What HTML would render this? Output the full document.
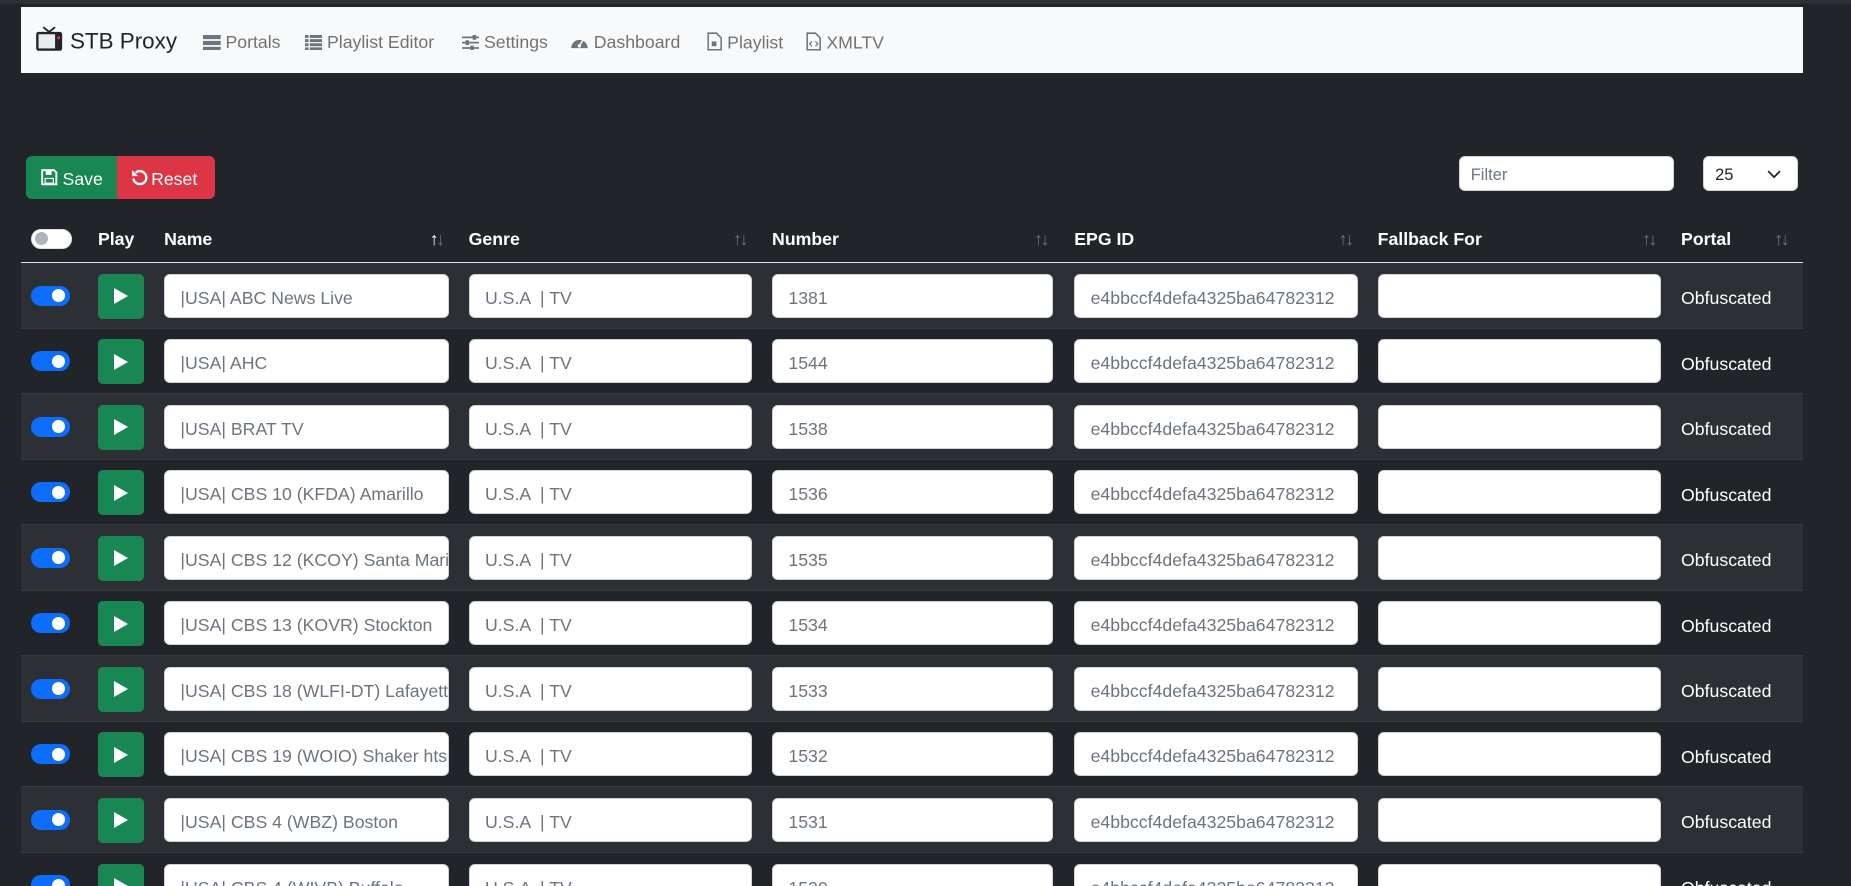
<!DOCTYPE html>
<html><head><meta charset="utf-8">
<style>
html,body{margin:0;padding:0;background:#212529;overflow:hidden}
body{width:1851px;height:886px;position:relative;font-family:"Liberation Sans",sans-serif}
#z{zoom:1.1805;position:absolute;left:0;top:0;width:1568px;height:751px;}
.topbar{position:absolute;left:0;top:0;width:1568px;height:3px;background:#2d3034}
.nav{position:absolute;left:18px;top:6px;width:1509px;height:56px;background:#f8f9fa}
.brand{position:absolute;left:12px;top:16px;font-size:19px;color:#212529}
.nl{position:absolute;top:21px;font-size:15px;color:rgba(0,0,0,.55);white-space:nowrap}
.nl svg{vertical-align:-2px;margin-right:4px}
.btn{position:absolute;top:132px;height:37px;color:#fff;font-size:15px;line-height:40px}
.inp{position:absolute;background:#fff;border:1px solid #ced4da;border-radius:5px;box-sizing:border-box;font-size:15px;color:#6c757d;padding-left:13px;overflow:hidden;white-space:nowrap}
.th{position:absolute;top:194px;font-size:15px;font-weight:bold;color:#fff}
.ar{position:absolute;top:194px;font-size:15px;color:#6c757d;letter-spacing:-2px}
.row{position:absolute;left:18px;width:1509px;height:55px;border-bottom:1px solid #373b3e;box-sizing:border-box}
.tg{position:absolute;left:8px;width:33px;height:17px;border-radius:9px;background:#0d6efd}
.tg::after{content:"";position:absolute;right:4px;top:3px;width:11px;height:11px;border-radius:50%;background:#fff}
.pb{position:absolute;left:65px;width:39px;height:38px;background:#198754;border-radius:4px}
.pb::after{content:"";position:absolute;left:14px;top:12px;border-left:12px solid #fff;border-top:7px solid transparent;border-bottom:7px solid transparent}
.ob{position:absolute;left:1406px;font-size:15px;color:#fff}
</style></head><body><div id="z">
<div class="topbar"></div>
<div class="nav">
 <div class="brand"><svg width="24" height="22" viewBox="0 0 24 22" style="vertical-align:-3px"><path d="M7 1l5 4 5-4" stroke="#212529" stroke-width="1.6" fill="none"/><rect x="1" y="5" width="22" height="16" rx="2" fill="#212529"/><rect x="3" y="7" width="14" height="12" fill="#e9ecef"/><circle cx="20" cy="10" r="1.3" fill="#dc3545"/></svg> STB Proxy</div>
 <div class="nl" style="left:154px"><svg width="15" height="13"><rect x="0" y="0" width="15" height="3.5" fill="#6c757d"/><rect x="0" y="5" width="15" height="3.5" fill="#6c757d"/><rect x="0" y="10" width="15" height="3" fill="#6c757d"/></svg>Portals</div>
 <div class="nl" style="left:240px"><svg width="15" height="13"><g fill="#6c757d"><rect x="0" y="0" width="3" height="2.5"/><rect x="4" y="0" width="11" height="2.5"/><rect x="0" y="3.5" width="3" height="2.5"/><rect x="4" y="3.5" width="11" height="2.5"/><rect x="0" y="7" width="3" height="2.5"/><rect x="4" y="7" width="11" height="2.5"/><rect x="0" y="10.5" width="3" height="2.5"/><rect x="4" y="10.5" width="11" height="2.5"/></g></svg>Playlist Editor</div>
 <div class="nl" style="left:373px"><svg width="15" height="13"><g stroke="#6c757d" stroke-width="1.5"><line x1="0" y1="2" x2="15" y2="2"/><line x1="0" y1="6.5" x2="15" y2="6.5"/><line x1="0" y1="11" x2="15" y2="11"/></g><g fill="#6c757d"><rect x="9" y="0" width="3" height="4"/><rect x="3" y="4.5" width="3" height="4"/><rect x="7" y="9" width="3" height="4"/></g></svg>Settings</div>
 <div class="nl" style="left:465px"><svg width="16" height="14"><path d="M1 12A7 7 0 1 1 15 12Z" fill="#6c757d"/><circle cx="8" cy="10" r="1.5" fill="#f8f9fa"/><line x1="8" y1="10" x2="11" y2="5" stroke="#f8f9fa" stroke-width="1.3"/></svg>Dashboard</div>
 <div class="nl" style="left:581px"><svg width="13" height="16"><path d="M1 1h7l4 4v10H1z" fill="none" stroke="#6c757d" stroke-width="1.3"/><rect x="4" y="8" width="4" height="4" fill="#6c757d"/></svg>Playlist</div>
 <div class="nl" style="left:665px"><svg width="13" height="16"><path d="M1 1h7l4 4v10H1z" fill="none" stroke="#6c757d" stroke-width="1.3"/><path d="M5 8l-2 2 2 2M8 8l2 2-2 2" fill="none" stroke="#6c757d"/></svg>XMLTV</div>
</div>
<div class="btn" style="left:22px;width:77px;background:#198754;border-radius:5px 0 0 5px"><svg width="14" height="14" style="margin:0 4px 0 13px;vertical-align:-1px"><path d="M1 1h10l2 2v10H1z" fill="none" stroke="#fff" stroke-width="1.6"/><rect x="4" y="1" width="5" height="4" fill="#fff"/><rect x="3.5" y="8" width="7" height="4" fill="none" stroke="#fff"/></svg>Save</div>
<div class="btn" style="left:99px;width:83px;background:#dc3545;border-radius:0 5px 5px 0"><svg width="14" height="14" style="margin:0 3px 0 12px;vertical-align:-1px"><path d="M4 3A5.5 5.5 0 1 1 2 8" fill="none" stroke="#fff" stroke-width="2"/><path d="M1 1v5h5z" fill="#fff"/></svg>Reset</div>
<div class="inp" style="left:1236px;top:132px;width:182px;height:30px;line-height:30px;font-size:14px;padding-left:9px">Filter</div>
<div class="inp" style="left:1443px;top:132px;width:80px;height:30px;line-height:30px;font-size:14px;color:#212529;padding-left:9px">25<svg width="12" height="8" style="position:absolute;left:53px;top:11px"><path d="M1 1l5 5 5-5" fill="none" stroke="#212529" stroke-width="1.5"/></svg></div>
<div style="position:absolute;left:26px;top:194px;width:33px;height:15px;border:1px solid #dee2e6;border-radius:9px;background:#fff"><div style="position:absolute;left:3px;top:2px;width:11px;height:11px;border-radius:50%;background:#adb5bd"></div></div>
<div class="th" style="left:83px">Play</div>
<div class="th" style="left:139px">Name</div><div class="ar" style="left:364px;color:#fff">↑<span style="color:#6c757d">↓</span></div>
<div class="th" style="left:397px">Genre</div><div class="ar" style="left:621px">↑↓</div>
<div class="th" style="left:654px">Number</div><div class="ar" style="left:876px">↑↓</div>
<div class="th" style="left:910px">EPG ID</div><div class="ar" style="left:1134px">↑↓</div>
<div class="th" style="left:1167px">Fallback For</div><div class="ar" style="left:1391px">↑↓</div>
<div class="th" style="left:1424px">Portal</div><div class="ar" style="left:1503px">↑↓</div>
<div style="position:absolute;left:18px;top:222px;width:1509px;height:1px;background:#dee2e6"></div>
<div id="rows"></div>
<script>
var names=["|USA| ABC News Live","|USA| AHC","|USA| BRAT TV","|USA| CBS 10 (KFDA) Amarillo","|USA| CBS 12 (KCOY) Santa Maria","|USA| CBS 13 (KOVR) Stockton","|USA| CBS 18 (WLFI-DT) Lafayette","|USA| CBS 19 (WOIO) Shaker hts","|USA| CBS 4 (WBZ) Boston","|USA| CBS 4 (WIVB) Buffalo"];
var nums=[1381,1544,1538,1536,1535,1534,1533,1532,1531,1530];
var h="";
for(var i=0;i<10;i++){var t=223+i*55.5;
h+='<div class="row" style="top:'+t+'px;height:55.5px;background:'+(i%2==0?'#2c3034':'#212529')+'">'+
'<div class="tg" style="top:19px"></div><div class="pb" style="top:9px"></div>'+
'<div class="inp" style="left:121px;top:9px;width:241px;height:37px;line-height:40px">'+names[i]+'</div>'+
'<div class="inp" style="left:379px;top:9px;width:240px;height:37px;line-height:40px">U.S.A &nbsp;| TV</div>'+
'<div class="inp" style="left:636px;top:9px;width:238px;height:37px;line-height:40px">'+nums[i]+'</div>'+
'<div class="inp" style="left:892px;top:9px;width:240px;height:37px;line-height:40px">e4bbccf4defa4325ba64782312</div>'+
'<div class="inp" style="left:1149px;top:9px;width:240px;height:37px"></div>'+
'<div class="ob" style="top:21px">Obfuscated</div></div>';}
document.getElementById("rows").innerHTML=h;
</script>
</div></body></html>
